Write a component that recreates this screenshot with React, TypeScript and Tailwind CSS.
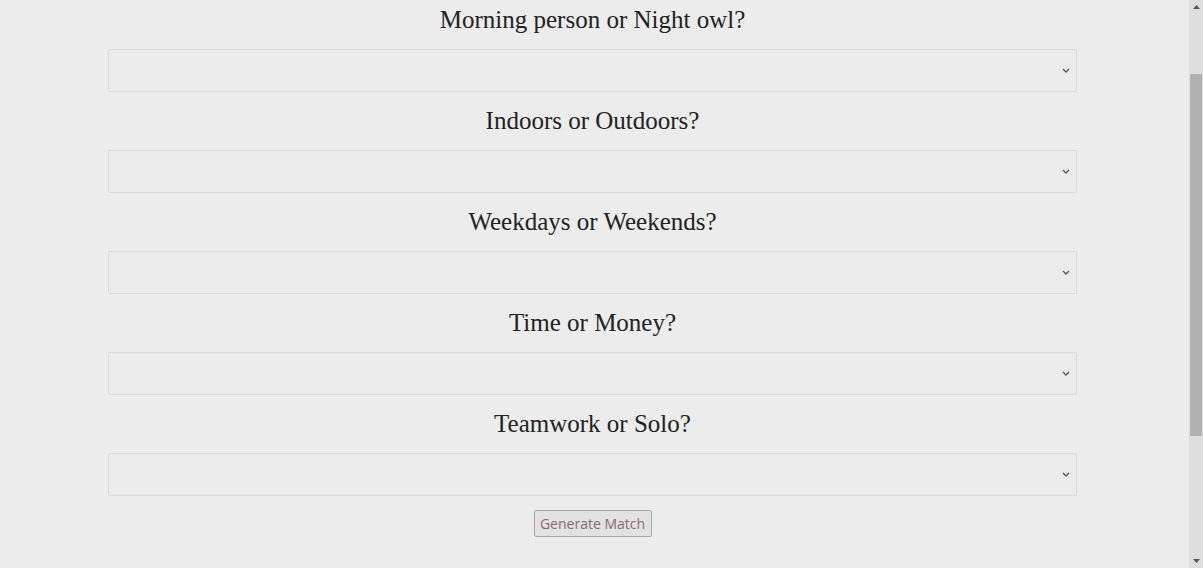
const questions = [
  'Morning person or Night owl?',
  'Indoors or Outdoors?',
  'Weekdays or Weekends?',
  'Time or Money?',
  'Teamwork or Solo?',
];

function Chevron() {
  return (
    <svg width="8" height="5" viewBox="0 0 8 5" className="text-[#555]">
      <path d="M1 1 L4 4 L7 1" fill="none" stroke="currentColor" strokeWidth="1.3" />
    </svg>
  );
}

function Question({ label }: { label: string }) {
  return (
    <div className="flex flex-col items-center">
      <label
        className="mt-[13px] mb-[13px] h-[32px] leading-[32px] text-[25px] text-[#222]"
        style={{ fontFamily: '"Liberation Serif", serif' }}
      >
        {label}
      </label>
      <div className="flex h-[43px] w-[969px] items-center justify-end rounded-[2px] border border-[#d9d9d9] bg-[#ebebeb] pr-[6px]">
        <Chevron />
      </div>
    </div>
  );
}

export default function App() {
  return (
    <div className="flex h-[568px] w-full overflow-hidden bg-[#ececec]">
      {/* Page content */}
      <div className="flex flex-1 flex-col items-center pr-[4px]">
        <div className="-mt-[9px] flex flex-col items-center">
          {questions.map((q) => (
            <Question key={q} label={q} />
          ))}
          <button
            className="mt-[14px] h-[27px] w-[118px] rounded-[2px] border border-[#a9a9a9] bg-[#e2e2e2] text-[14px] text-[#8a6a6e]"
            style={{ fontFamily: '"Open Sans", sans-serif' }}
          >
            Generate Match
          </button>
        </div>
      </div>

      {/* Scrollbar */}
      <div className="flex w-[14px] flex-col items-center bg-[#dedede]">
        <div className="flex h-[14px] items-center justify-center">
          <svg width="7" height="4" viewBox="0 0 7 4">
            <path d="M0 4 L3.5 0 L7 4 Z" fill="#555" />
          </svg>
        </div>
        <div className="mt-[60px] h-[362px] w-[12px] bg-[#b1b1b1]" />
        <div className="flex-1" />
        <div className="flex h-[14px] items-center justify-center">
          <svg width="7" height="4" viewBox="0 0 7 4">
            <path d="M0 0 L3.5 4 L7 0 Z" fill="#555" />
          </svg>
        </div>
      </div>
    </div>
  );
}
